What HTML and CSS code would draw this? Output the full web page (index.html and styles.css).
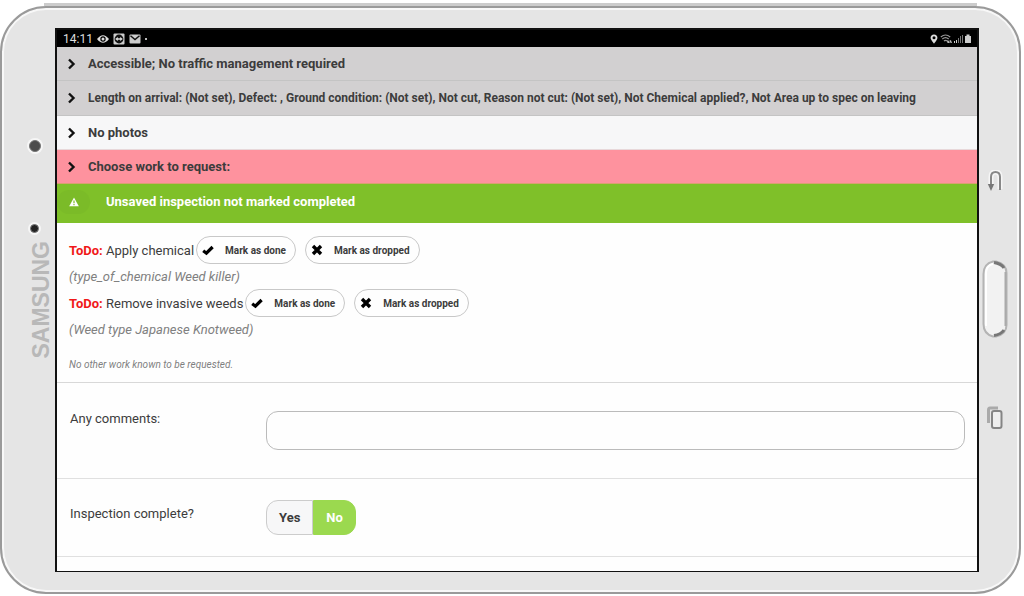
FILE: index.html
```html
<!DOCTYPE html>
<html lang="en">

<head>
    <meta charset="UTF-8">
    <meta name="viewport" content="width=device-width, initial-scale=1.0">
    <title>Inspection</title>
    <link rel="stylesheet" href="styles.css">
</head>

<body>
    <!-- Icons used more than once -->
    <svg class="sprite" aria-hidden="true">
        <symbol id="chevron" viewBox="0 0 8 12">
            <path d="M1 1.5 L5.5 6 L1 10.5" fill="none" stroke="#111" stroke-width="2.4" />
        </symbol>
        <symbol id="check" viewBox="0 0 12 12">
            <path d="M1.2 6.8 L4.4 9.2 L10.6 3" fill="none" stroke="#000" stroke-width="3.2" />
        </symbol>
        <symbol id="cross" viewBox="0 0 12 12">
            <path d="M2 2 L10 10 M10 2 L2 10" fill="none" stroke="#000" stroke-width="3.4" />
        </symbol>
    </svg>

    <div class="side-key"></div>
    <div class="tablet">
        <div class="bezel-left">
            <div class="camera"></div>
            <div class="sensor"></div>
            <div class="brand">SAMSUNG</div>
        </div>

        <div class="screen">
            <header class="status">
                <span>14:11</span>
                <svg width="12" height="12" viewBox="0 0 12 12">
                    <path d="M0 6 Q6 -1.6 12 6 Q6 13.6 0 6 Z" fill="#ddd" />
                    <circle cx="6" cy="6" r="2.7" fill="#000" />
                    <circle cx="6" cy="6" r="1.5" fill="#ddd" />
                </svg>
                <svg width="12" height="12" viewBox="0 0 12 12">
                    <rect x="0.5" y="0.5" width="11" height="11" rx="1" fill="#ccc" />
                    <circle cx="6" cy="6" r="4.4" fill="#111" />
                    <path d="M2.2 6 L4.8 4 V5.2 H7.2 V4 L9.8 6 L7.2 8 V6.8 H4.8 V8 Z" fill="#ddd" />
                </svg>
                <svg width="12" height="12" viewBox="0 0 12 12">
                    <rect x="0.5" y="1.5" width="11" height="9" rx="1" fill="#ccc" />
                    <path d="M1.5 2.8 L6 6.6 L10.5 2.8" fill="none" stroke="#111" stroke-width="1.4" />
                </svg>
                <span class="dot"></span>
                <div class="status-right">
                    <svg width="8" height="10" viewBox="0 0 8 10">
                        <path d="M4 0.5 C1.9 0.5 0.6 2 0.6 3.8 C0.6 6 4 9.6 4 9.6 C4 9.6 7.4 6 7.4 3.8 C7.4 2 6.1 0.5 4 0.5 Z" fill="#ddd" />
                        <circle cx="4" cy="3.8" r="1.5" fill="#000" />
                    </svg>
                    <svg width="12" height="10" viewBox="0 0 12 10">
                        <path d="M0.8 3 Q5.5 -1 10.2 3 M2.3 5 Q5.5 2.2 8.7 5 M4 7 Q5.5 5.6 7 7" fill="none" stroke="#999" stroke-width="1.2" />
                        <path d="M7.4 6.5 L8.2 9 L9 6.5 M9.8 9 L10.6 6.5 L11.4 9" fill="none" stroke="#ccc" stroke-width="1" />
                    </svg>
                    <svg width="9" height="10" viewBox="0 0 9 10">
                        <path d="M0 7h1v2h-1z M2 6h1v3h-1z" fill="#ccc" />
                        <path d="M4 4h1v5h-1z M6 2h1v7h-1z M8 1h1v8h-1z" fill="#777" />
                    </svg>
                    <svg width="6" height="10" viewBox="0 0 6 10">
                        <path d="M0 2 H1.5 V0.5 H4.5 V2 H6 V9 H0 Z" fill="#ccc" />
                    </svg>
                </div>
            </header>

            <button type="button" class="section grey"><svg class="chevron"><use href="#chevron" /></svg>Accessible; No traffic management required</button>
            <button type="button" class="section grey summary"><svg class="chevron"><use href="#chevron" /></svg>Length on arrival: (Not set), Defect: , Ground condition: (Not set), Not cut, Reason not cut: (Not set), Not Chemical applied?, Not Area up to spec on leaving</button>
            <button type="button" class="section light"><svg class="chevron"><use href="#chevron" /></svg>No photos</button>
            <button type="button" class="section pink"><svg class="chevron"><use href="#chevron" /></svg>Choose work to request:</button>

            <div class="alert">
                <span class="alert-icon">
                    <svg width="10" height="10" viewBox="0 0 10 10">
                        <path d="M5 0.5 L9.8 9.3 H0.2 Z" fill="#fff" />
                        <path d="M5 3.4 V6.2 M5 7 V8.2" stroke="#7fc029" stroke-width="1.2" />
                    </svg>
                </span>
                Unsaved inspection not marked completed
            </div>

            <div class="work">
                <div class="todo">
                    <span><b>ToDo:</b> Apply chemical</span>
                    <button type="button" class="pill"><svg><use href="#check" /></svg>Mark as done</button>
                    <button type="button" class="pill"><svg><use href="#cross" /></svg>Mark as dropped</button>
                </div>
                <p class="detail">(type_of_chemical Weed killer)</p>
                <div class="todo">
                    <span><b>ToDo:</b> Remove invasive weeds</span>
                    <button type="button" class="pill"><svg><use href="#check" /></svg>Mark as done</button>
                    <button type="button" class="pill"><svg><use href="#cross" /></svg>Mark as dropped</button>
                </div>
                <p class="detail">(Weed type Japanese Knotweed)</p>
                <p class="note">No other work known to be requested.</p>
            </div>

            <form>
                <div class="field comments">
                    <label class="field-label" for="comments">Any comments:</label>
                    <textarea id="comments" rows="1"></textarea>
                </div>
                <div class="field complete" role="radiogroup" aria-labelledby="complete-label">
                    <span class="field-label" id="complete-label">Inspection complete?</span>
                    <div class="toggle">
                        <input type="radio" name="complete" id="complete-yes">
                        <label for="complete-yes">Yes</label>
                        <input type="radio" name="complete" id="complete-no" checked>
                        <label for="complete-no">No</label>
                    </div>
                </div>
            </form>
        </div>

        <div class="bezel-right">
            <svg width="16" height="22" viewBox="0 0 16 22">
                <path d="M4 16 V7 Q4 2 8.5 2 Q13 2 13 7 V19" fill="none" stroke="#f6f6f6" stroke-width="5" />
                <path d="M4 15 V7 Q4 2 8.5 2 Q13 2 13 7 V20" fill="none" stroke="#888" stroke-width="2" />
                <path d="M0.8 14 H7.2 L4 21 Z" fill="#777" />
            </svg>
            <svg width="28" height="78" viewBox="0 0 28 78">
                <path d="M12 1.5 H15 Q25.5 4 25.5 13 V65 Q25.5 74 15 76.5 H12 Q2.5 74 2.5 64 V14 Q2.5 4 12 1.5 Z" fill="#f2f2f2" stroke="#b4b4b4" stroke-width="2" />
                <path d="M5 66 V12 Q6 5 12 4" fill="none" stroke="#fff" stroke-width="2" />
                <path d="M24.5 12 V66" stroke="#aaa" stroke-width="2" />
                <path d="M13 2.5 Q20 3.5 23 8 M13 75.5 Q20 74.5 23 70" fill="none" stroke="#777" stroke-width="3" />
            </svg>
            <svg width="16" height="24" viewBox="0 0 16 24">
                <path d="M1.5 17 V4 Q1.5 2 3 2 H11" fill="none" stroke="#aaa" stroke-width="3" />
                <rect x="5" y="5" width="9.5" height="17" rx="2" fill="#eee" stroke="#858585" stroke-width="2" />
            </svg>
        </div>
    </div>
</body>

</html>
```
FILE: styles.css
```css
* {
    box-sizing: border-box;
}

body {
    margin: 0;
    padding: 3px 3px 2px 0;
    min-height: 100vh;
    display: flex;
    flex-direction: column;
    background-color: #fff;
    color: #3c3c3c;
    font-family: Roboto, "Liberation Sans", sans-serif;
    font-size: 13px;
}

button,
textarea {
    font-family: inherit;
    color: inherit;
}

p {
    margin: 0;
}

.sprite {
    display: none;
}

/* Tablet frame */
.side-key {
    height: 3px;
    margin: 0 44px;
    background-color: #ccc;
}

.tablet {
    flex: 1;
    display: flex;
    padding: 20px 0;
    background-color: #e5e5e5;
    border: 2px solid #9a9a9a;
    border-radius: 46px;
    box-shadow: inset 0 0 0 2px #f8f8f8;
}

.bezel-left {
    flex: 0 0 53px;
    display: flex;
    flex-direction: column;
    padding: 112px 0 0 27px;
}

.camera,
.sensor {
    width: 12px;
    height: 12px;
    border-radius: 50%;
    background-color: #4c4c4c;
    border: 1px solid #777;
    box-shadow: 0 0 0 2px #f6f6f6;
}

.sensor {
    width: 9px;
    height: 9px;
    margin: 72px 0 8px 1px;
    background-color: #222;
}

.brand {
    writing-mode: vertical-rl;
    transform: rotate(180deg);
    color: #b8b8b8;
    font-family: "Liberation Sans", sans-serif;
    font-size: 23px;
    font-weight: bold;
    line-height: 24px;
}

.bezel-right {
    flex: 0 0 40px;
    display: flex;
    flex-direction: column;
    align-items: center;
    justify-content: center;
    gap: 68px;
    padding-right: 8px;
}

.screen {
    flex: 1;
    min-width: 0;
    background-color: #fefefe;
    border: 2px solid #111;
    border-bottom-width: 1px;
}

/* Status bar */
.status {
    display: flex;
    align-items: center;
    gap: 4px;
    height: 17px;
    padding: 0 6px;
    background-color: #000;
    color: #ddd;
    font-size: 12px;
}

.dot {
    width: 2px;
    height: 2px;
    background-color: #bbb;
}

.status-right {
    display: flex;
    gap: 2px;
    margin-left: auto;
}

/* Collapsible sections */
.section {
    display: flex;
    align-items: center;
    width: 100%;
    min-height: 34px;
    padding: 0 11px;
    border: none;
    border-bottom: 1px solid #c4c4c4;
    font-size: 13px;
    font-weight: bold;
    text-align: left;
}

.chevron {
    flex: none;
    width: 8px;
    height: 12px;
    margin-right: 12px;
}

.grey {
    background-color: #d2d0d1;
}

.summary {
    min-height: 35px;
    font-size: 12px;
}

.light {
    background-color: #f7f7f8;
    border-color: #e8d8da;
}

.pink {
    background-color: #fe929e;
    border-color: #d9a070;
}

.alert {
    display: flex;
    align-items: center;
    gap: 16px;
    height: 39px;
    padding-bottom: 4px;
    background-color: #7fc029;
    color: #fff;
    font-weight: bold;
}

.alert-icon {
    display: flex;
    align-items: center;
    justify-content: center;
    width: 33px;
    height: 24px;
    border-radius: 12px;
    background-color: #7bbb28;
}

/* Work list */
.work {
    padding: 13px 12px 9px;
    border-bottom: 1px solid #d8d8d8;
}

.todo {
    display: flex;
    align-items: center;
}

.todo b {
    color: #f01818;
}

.pill {
    display: flex;
    align-items: center;
    gap: 11px;
    height: 28px;
    margin-left: 2px;
    padding: 0 9px 0 5px;
    background-color: #fefefe;
    border: 1px solid #c8c8c8;
    border-radius: 14px;
    font-size: 10px;
    font-weight: bold;
}

.pill + .pill {
    margin-left: 9px;
}

.pill svg {
    width: 12px;
    height: 12px;
}

.detail {
    color: #808080;
    font-style: italic;
    line-height: 25px;
}

.note {
    margin-top: 15px;
    color: #808080;
    font-size: 10px;
    font-style: italic;
    line-height: 16px;
}

/* Form */
.field {
    display: flex;
    align-items: flex-start;
    padding: 28px 12px 28px 13px;
    border-bottom: 1px solid #e0e0e0;
}

.field-label {
    flex: 0 0 196px;
    line-height: 16px;
}

.comments textarea {
    flex: 1;
    height: 39px;
    padding: 10px;
    background-color: #fefefe;
    border: 1px solid #bbb;
    border-radius: 12px;
    resize: none;
}

.complete {
    padding-top: 21px;
    padding-bottom: 21px;
}

.complete .field-label {
    padding-top: 6px;
}

.toggle {
    display: flex;
}

.toggle input {
    position: absolute;
    opacity: 0;
}

.toggle label {
    padding: 0 12px;
    background-color: #f7f7f8;
    border: 1px solid #ccc;
    border-radius: 12px 0 0 12px;
    font-weight: bold;
    line-height: 33px;
}

.toggle label:last-child {
    border-radius: 0 12px 12px 0;
}

.toggle input:checked + label {
    background-color: #9bd94f;
    border-color: #9bd94f;
    color: #fff;
}
```
